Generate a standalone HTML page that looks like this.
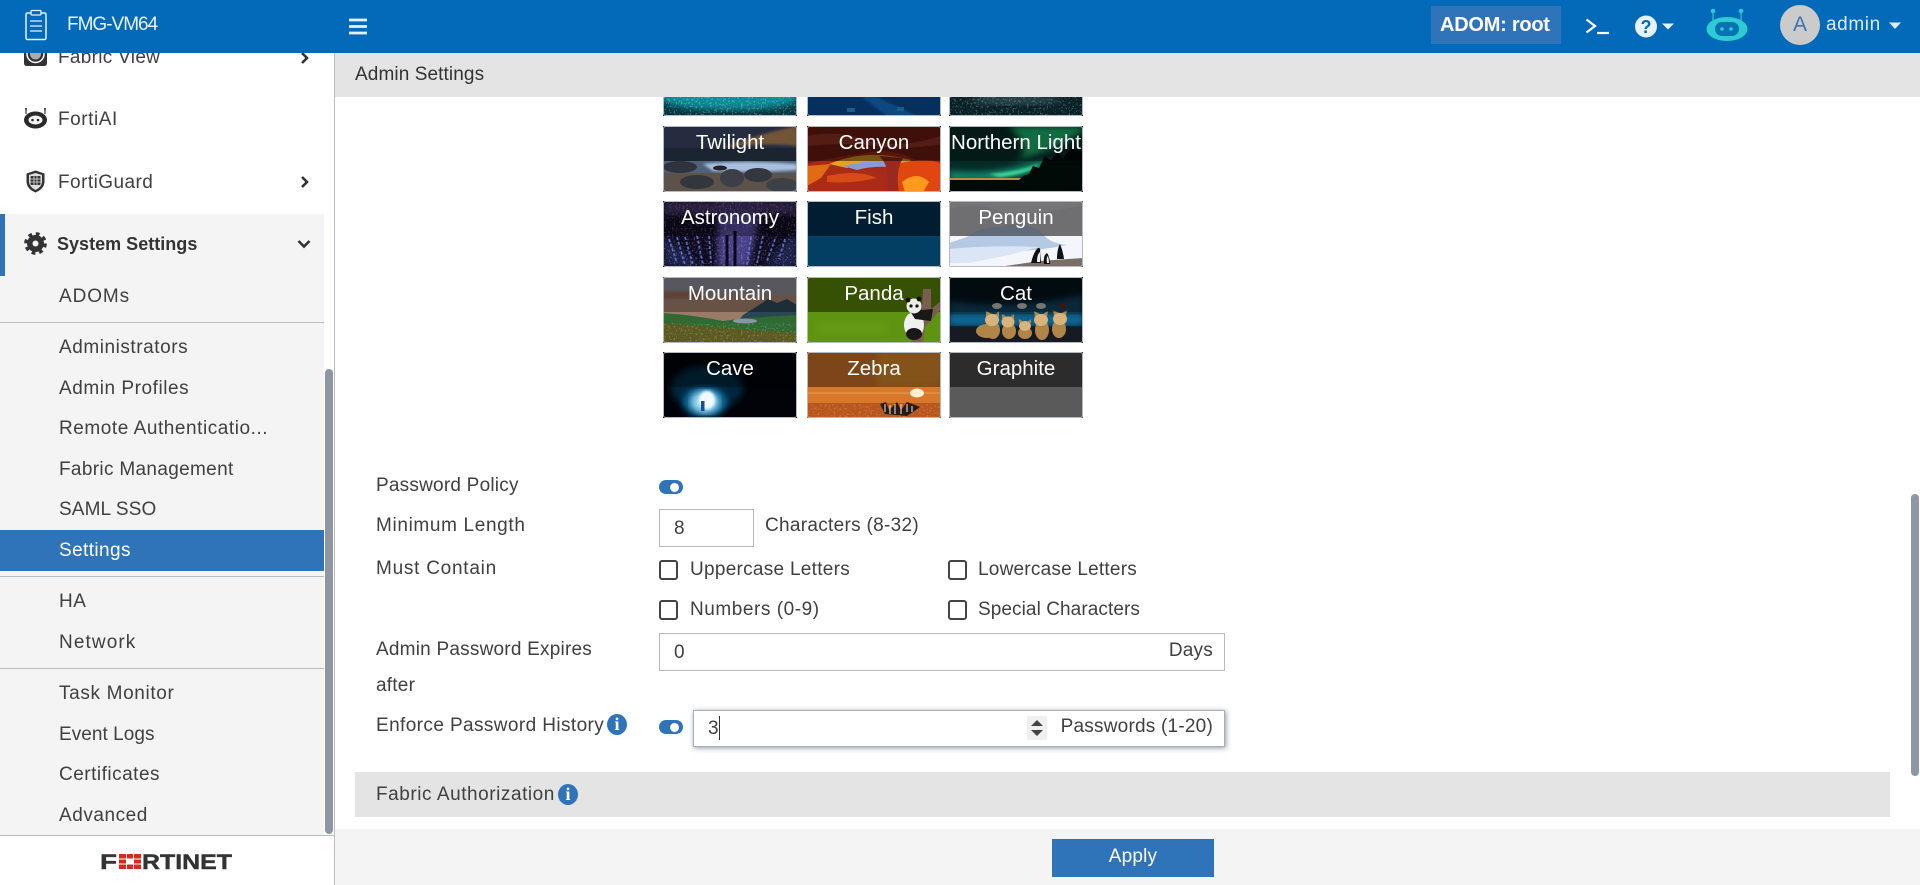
<!DOCTYPE html>
<html lang="en">
<head>
<meta charset="utf-8">
<title>FMG-VM64 Admin Settings</title>
<style>
html,body{margin:0;padding:0;width:1920px;height:885px;overflow:hidden;background:#fff}
body{position:relative;font-family:"Liberation Sans",Arial,sans-serif;font-size:19px;color:#404040}
.a{position:absolute}
.t{position:absolute;white-space:nowrap;line-height:24px;height:24px;margin-top:1px}
.s{letter-spacing:.55px;color:#404040;left:59px}
.f{letter-spacing:.22px;color:#404040}
.box{position:absolute;box-sizing:border-box;background:#fff;border:1px solid #b5bac2}
.cb{position:absolute;box-sizing:border-box;width:19px;height:20px;border:2px solid #444;border-radius:3px;background:#fff}
.tg{position:absolute;width:24px;height:14px;border-radius:7px;background:#2f74b8}
.tg:after{content:"";position:absolute;left:11px;top:2.500px;width:9px;height:9px;border-radius:50%;background:#fff}
.i{position:absolute;width:20px;height:21px;border-radius:50%;background:#2f74b8;color:#fff;font:700 18px/21px "Liberation Serif",serif;text-align:center}
.th{position:absolute;width:134px;height:66px;display:block;overflow:hidden}
.th text{font-family:"Liberation Sans",sans-serif;font-size:20.500px;fill:#fff;text-anchor:middle}
.dv{position:absolute;left:0;width:324px;height:1px;background:#b8bcc6}
</style>
</head>
<body>

<svg width="0" height="0" style="position:absolute">
<defs>
<filter id="n" x="0" y="0" width="100%" height="100%"><feTurbulence type="fractalNoise" baseFrequency=".55" numOctaves="2" seed="4"/><feColorMatrix values="0 0 0 0 1  0 0 0 0 1  0 0 0 0 1  0 0 0 9 -5.2"/></filter>
<filter id="b1"><feGaussianBlur stdDeviation="1.2"/></filter>
<filter id="b3"><feGaussianBlur stdDeviation="3.5"/></filter>
</defs>
</svg>

<!-- thumbnails -->
<!-- partial row -->
<svg class="th" style="left:663px;top:50px" viewBox="0 0 134 66"><rect width="134" height="66" fill="#04363f"/><ellipse cx="67" cy="48" rx="70" ry="12" fill="#0a8a98" filter="url(#b3)"/><rect y="47" width="134" height="19" filter="url(#n)" opacity=".3"/><rect x=".5" y=".5" width="133" height="65" rx="2" fill="none" stroke="#b5bac2"/></svg>
<svg class="th" style="left:807px;top:50px" viewBox="0 0 134 66"><rect width="134" height="66" fill="#05305e"/><path d="M55 47 L80 66 H110 L70 47Z" fill="#0a4a80" filter="url(#b1)"/><rect x="40" y="58" width="8" height="4" fill="#1a5c8c"/><rect x="90" y="57" width="7" height="4" fill="#1a5c8c"/><rect x=".5" y=".5" width="133" height="65" rx="2" fill="none" stroke="#b5bac2"/></svg>
<svg class="th" style="left:949px;top:50px" viewBox="0 0 134 66"><rect width="134" height="66" fill="#082126"/><rect y="47" width="134" height="19" filter="url(#n)" opacity=".25"/><ellipse cx="67" cy="50" rx="45" ry="5" fill="#6a8d96" opacity=".35" filter="url(#b3)"/><rect x=".5" y=".5" width="133" height="65" rx="2" fill="none" stroke="#b5bac2"/></svg>

<!-- Twilight -->
<svg class="th" style="left:663px;top:126px" viewBox="0 0 134 66"><rect width="134" height="66" fill="#5d5249"/><rect width="134" height="25" fill="#3e4868"/><path d="M60 22 Q95 8 134 0 V20 Q100 16 60 22Z" fill="#b88a58" filter="url(#b1)"/><rect y="22" width="134" height="14" fill="#2d3a50"/><path d="M0 35 H134 V47 H0Z" fill="#4f6178"/><path d="M40 38 Q80 34 134 38 V44 Q90 47 50 45Z" fill="#a8c0de" filter="url(#b1)"/><ellipse cx="17" cy="41" rx="17" ry="6" fill="#2f333b"/><ellipse cx="57" cy="42" rx="7" ry="2.500" fill="#22252c"/><ellipse cx="69" cy="52" rx="12" ry="9" fill="#3c3f46"/><ellipse cx="95" cy="49" rx="14" ry="7" fill="#34373e"/><ellipse cx="119" cy="59" rx="16" ry="7" fill="#3c4148"/><ellipse cx="34" cy="56" rx="17" ry="7" fill="#33363d"/><rect width="134" height="35" fill="#000" opacity=".38"/><text x="67" y="23">Twilight</text><rect x=".5" y=".5" width="133" height="65" rx="2" fill="none" stroke="#b5bac2"/></svg>
<!-- Canyon -->
<svg class="th" style="left:807px;top:126px" viewBox="0 0 134 66"><rect width="134" height="66" fill="#a8291a"/><path d="M0 0H134V34H110Q80 20 55 28Q30 30 0 38Z" fill="#7a1f14"/><path d="M0 10 Q30 4 60 14 T134 10 V18 Q100 24 70 20 T0 20Z" fill="#a0392a"/><path d="M22 38 Q60 22 104 34 L100 40 Q70 30 40 42Z" fill="#e8a020"/><path d="M36 40 Q65 32 98 37 L96 43 Q70 38 50 44Z" fill="#8c9ad8"/><path d="M0 46 Q25 36 45 45 Q70 41 78 52 L76 66 H0Z" fill="#a82c16"/><path d="M20 50 Q50 43 70 52 Q45 58 20 56Z" fill="#d84a18"/><path d="M0 40 L24 38 L14 52 L0 60Z" fill="#e26a12"/><path d="M90 38 Q120 30 134 38 V66 H88 Q80 50 90 38Z" fill="#e0460f"/><path d="M95 56 Q110 44 122 56 L116 66 H98Z" fill="#ff9a20"/><path d="M72 30 Q84 40 80 66 H92 Q88 45 96 32Z" fill="#9a2a1f"/><rect width="134" height="35" fill="#000" opacity=".48"/><text x="67" y="23">Canyon</text><rect x=".5" y=".5" width="133" height="65" rx="2" fill="none" stroke="#b5bac2"/></svg>
<!-- Northern Light -->
<svg class="th" style="left:949px;top:126px" viewBox="0 0 134 66"><rect width="134" height="66" fill="#052a26"/><path d="M60 0 Q90 30 60 35 Q95 30 134 5 V0Z" fill="#1fb06a" filter="url(#b3)"/><path d="M0 45 Q40 50 80 38 Q100 32 110 34 Q90 48 50 54 H0Z" fill="#189070" filter="url(#b3)"/><path d="M40 48 Q70 46 90 38 Q80 48 50 51Z" fill="#3fd89a" filter="url(#b1)"/><rect y="52" width="76" height="2" fill="#c08a40"/><rect y="54" width="134" height="12" fill="#020806"/><path d="M64 60 L74 50 L80 48 L84 40 L90 42 L96 30 L102 34 L108 26 L114 32 L122 22 L134 26 V66 H64Z" fill="#020a08"/><rect width="134" height="35" fill="#000" opacity=".38"/><text x="67" y="23">Northern Light</text><rect x=".5" y=".5" width="133" height="65" rx="2" fill="none" stroke="#b5bac2"/></svg>

<!-- Astronomy -->
<svg class="th" style="left:663px;top:201px" viewBox="0 0 134 66"><rect width="134" height="66" fill="#0e0a20"/><path d="M55 0 H100 L85 66 H55Z" fill="#4a3f8a" filter="url(#b3)"/><path d="M0 0 H134 V14 H0Z" fill="#3a2a5a" filter="url(#b3)"/><path d="M0 34 L40 66 H0Z M134 30 L100 66 H134Z" fill="#1a2048" filter="url(#b3)"/><rect width="134" height="66" filter="url(#n)" opacity=".22"/><path d="M6 38 L14 62 M14 36 L22 64 M22 36 L30 64 M34 35 L40 64 M46 35 L48 62 M88 36 L84 64 M100 35 L94 62 M112 38 L104 60 M122 38 L116 58" stroke="#6a78e0" stroke-width="1.800" stroke-dasharray="3 2" opacity=".85"/><path d="M64 34V66 M72 30V66" stroke="#0a0814" stroke-width="3"/><rect width="134" height="35" fill="#000" opacity=".3"/><text x="67" y="23">Astronomy</text><rect x=".5" y=".5" width="133" height="65" rx="2" fill="none" stroke="#b5bac2"/></svg>
<!-- Fish -->
<svg class="th" style="left:807px;top:201px" viewBox="0 0 134 66"><rect width="134" height="66" fill="#023f62"/><rect width="134" height="35" fill="#001d31"/><text x="67" y="23">Fish</text><rect x=".5" y=".5" width="133" height="65" rx="2" fill="none" stroke="#b5bac2"/></svg>
<!-- Penguin -->
<svg class="th" style="left:949px;top:201px" viewBox="0 0 134 66"><rect width="134" height="66" fill="#f4f6fb"/><rect width="134" height="35" fill="#d2d2d6"/><path d="M0 8 Q30 0 50 10 Q70 18 134 4 V0 H0Z" fill="#dedee0"/><path d="M0 42 L18 36 Q30 26 50 26 Q75 20 92 30 Q98 42 118 44 Q90 50 60 50 L0 58Z" fill="#b5c8e4"/><path d="M0 48 Q40 44 90 46 L60 54 L20 62 H0Z" fill="#dae6f5"/><path d="M50 66 L90 60 L134 57 V66Z" fill="#7a6e68"/><path d="M82 62 Q85 50 89 47 Q92 47 91 50 L92 62Z M95 63 Q94 54 98 52 Q101 56 101 63Z M108 58 Q108 48 111 43 Q114 50 115 58Z" fill="#111"/><path d="M88 61 Q88 53 91 51 L91 61Z M98 62 Q97 56 99 55 Q100 58 100 62Z" fill="#eee"/><rect width="134" height="35" fill="#000" opacity=".47"/><text x="67" y="23">Penguin</text><rect x=".5" y=".5" width="133" height="65" rx="2" fill="none" stroke="#b5bac2"/></svg>

<!-- Mountain -->
<svg class="th" style="left:663px;top:277px" viewBox="0 0 134 66"><rect width="134" height="66" fill="#9a7a68"/><rect width="134" height="18" fill="#80808a"/><rect x="0" y="14" width="40" height="8" fill="#8c6254" filter="url(#b1)"/><path d="M80 38 L96 28 L105 22 L114 26 L124 22 L134 28 V46 H74Z" fill="#2a4654"/><path d="M0 36 Q30 38 60 44 Q90 40 134 38 V66 H0Z" fill="#2f6a32"/><path d="M0 46 Q50 50 134 56 V66 H0Z" fill="#5a5a20"/><rect y="46" width="134" height="20" filter="url(#n)" fill="#e0a040" opacity=".2"/><ellipse cx="82" cy="44" rx="12" ry="2.500" fill="#8a95a8"/><rect width="134" height="35" fill="#000" opacity=".32"/><text x="67" y="23">Mountain</text><rect x=".5" y=".5" width="133" height="65" rx="2" fill="none" stroke="#b5bac2"/></svg>
<!-- Panda -->
<svg class="th" style="left:807px;top:277px" viewBox="0 0 134 66"><rect width="134" height="66" fill="#5e9410"/><rect x="10" y="44" width="70" height="14" fill="#649a14" filter="url(#b3)"/><rect width="134" height="35" fill="#5e8a08"/><rect width="134" height="35" fill="#000" opacity=".42"/><path d="M104 66 L110 50 L115 30 L116 12 H124 L124 32 L134 24 V32 L118 50 L116 66Z" fill="#7a5f50"/><ellipse cx="107" cy="48" rx="10" ry="13" fill="#f0f0ee"/><ellipse cx="107" cy="57" rx="8" ry="6" fill="#181818"/><path d="M103 34 L126 32 L124 44 L108 42Z" fill="#181818"/><circle cx="107" cy="29" r="7.500" fill="#ecece8"/><circle cx="101" cy="23" r="2.400" fill="#111"/><circle cx="112" cy="22" r="2.400" fill="#111"/><circle cx="104" cy="29" r="1.600" fill="#111"/><circle cx="110" cy="29" r="1.600" fill="#111"/><text x="67" y="23">Panda</text><rect x=".5" y=".5" width="133" height="65" rx="2" fill="none" stroke="#b5bac2"/></svg>
<!-- Cat -->
<svg class="th" style="left:949px;top:277px" viewBox="0 0 134 66"><rect width="134" height="66" fill="#041018"/><path d="M0 24 Q60 34 134 18 V50 H0Z" fill="#0d3a52" filter="url(#b3)"/><rect y="38" width="134" height="10" fill="#0a6a9a" filter="url(#b3)"/><rect y="50" width="134" height="16" fill="#171a22"/><ellipse cx="48" cy="29" rx="5" ry="3" fill="#a8a8a2"/><ellipse cx="73" cy="29" rx="5" ry="3" fill="#a8a8a2"/><ellipse cx="92" cy="29" rx="5" ry="3" fill="#a8a8a2"/><circle cx="114" cy="29" r="3" fill="#6a1818"/><g fill="#b08648"><ellipse cx="38" cy="54" rx="11" ry="7"/><ellipse cx="44" cy="53" rx="7" ry="9"/><ellipse cx="60" cy="54" rx="7" ry="8"/><ellipse cx="76" cy="56" rx="7" ry="6"/><ellipse cx="93" cy="53" rx="7" ry="10"/><ellipse cx="110" cy="52" rx="7" ry="9"/><path d="M37 40 L37 34 L43 37 L47 37 L50 34 L50 40Z M53 42 L53 37 L58 40 L61 40 L65 37 L65 42Z M70 46 L70 42 L75 45 L78 45 L82 42 L82 46Z M86 40 L85 34 L91 37 L94 37 L99 34 L98 40Z M105 39 L104 33 L110 36 L113 36 L118 33 L117 39Z"/></g><g fill="#d8b47c"><ellipse cx="43" cy="43" rx="7" ry="6"/><ellipse cx="59" cy="45" rx="6.500" ry="5.500"/><ellipse cx="76" cy="49" rx="6" ry="5"/><ellipse cx="92" cy="43" rx="7" ry="6"/><ellipse cx="111" cy="42" rx="7" ry="6"/></g><rect width="134" height="35" fill="#000" opacity=".3"/><text x="67" y="23">Cat</text><rect x=".5" y=".5" width="133" height="65" rx="2" fill="none" stroke="#b5bac2"/></svg>

<!-- Cave -->
<svg class="th" style="left:663px;top:352px" viewBox="0 0 134 66"><rect width="134" height="66" fill="#010308"/><ellipse cx="44" cy="36" rx="36" ry="22" fill="#04283e" filter="url(#b3)"/><ellipse cx="42" cy="50" rx="22" ry="15" fill="#0a6a9c" filter="url(#b3)"/><ellipse cx="42" cy="50" rx="14" ry="11" fill="#a0dcf4" filter="url(#b3)"/><ellipse cx="44" cy="48" rx="8" ry="9" fill="#f2fafd" filter="url(#b1)"/><rect x="38" y="49" width="3.500" height="10" fill="#1a4a9a"/><rect width="134" height="35" fill="#000" opacity=".3"/><text x="67" y="23">Cave</text><rect x=".5" y=".5" width="133" height="65" rx="2" fill="none" stroke="#b5bac2"/></svg>
<!-- Zebra -->
<svg class="th" style="left:807px;top:352px" viewBox="0 0 134 66"><rect width="134" height="66" fill="#d8741f"/><rect width="134" height="35" fill="#7c4618"/><rect x="70" y="0" width="64" height="35" fill="#8a5c1e" filter="url(#b3)" opacity=".6"/><rect y="35" width="134" height="16" fill="#d9782a"/><rect y="40" width="134" height="2" fill="#e8a050" opacity=".5"/><ellipse cx="110" cy="41" rx="7" ry="4.500" fill="#fff2d0"/><rect y="51" width="134" height="15" fill="#b8561c"/><rect y="52" width="134" height="14" filter="url(#n)" opacity=".18"/><path d="M73 52 L79 50 L82 58 L90 50 L94 58 L100 50 L108 53 L113 55 L106 60 L100 64 L78 62Z" fill="#2a1a14"/><path d="M78 52V60 M83 53V62 M88 52V62 M94 52V62 M100 52V60 M105 54V60" stroke="#eee" stroke-width="1"/><text x="67" y="23">Zebra</text><rect x=".5" y=".5" width="133" height="65" rx="2" fill="none" stroke="#b5bac2"/></svg>
<!-- Graphite -->
<svg class="th" style="left:949px;top:352px" viewBox="0 0 134 66"><rect width="134" height="66" fill="#5a5a5a"/><rect width="134" height="35" fill="#2c2c2c"/><text x="67" y="23">Graphite</text><rect x=".5" y=".5" width="133" height="65" rx="2" fill="none" stroke="#b5bac2"/></svg>

<!-- form -->
<div class="t f" style="left:376px;top:473px">Password Policy</div>
<div class="tg" style="left:659px;top:480px"></div>

<div class="t f" style="left:376px;top:513px;letter-spacing:.65px">Minimum Length</div>
<div class="box" style="left:659px;top:509px;width:95px;height:38px"></div>
<div class="t f" style="left:674px;top:516px">8</div>
<div class="t f" style="left:765px;top:513px;letter-spacing:.3px">Characters (8-32)</div>

<div class="t f" style="left:376px;top:556px;letter-spacing:.75px">Must Contain</div>
<div class="cb" style="left:659px;top:560px"></div>
<div class="t f" style="left:690px;top:557px;letter-spacing:.28px">Uppercase Letters</div>
<div class="cb" style="left:948px;top:560px"></div>
<div class="t f" style="left:978px;top:557px">Lowercase Letters</div>
<div class="cb" style="left:659px;top:600px"></div>
<div class="t f" style="left:690px;top:597px;letter-spacing:.55px">Numbers (0-9)</div>
<div class="cb" style="left:948px;top:600px"></div>
<div class="t f" style="left:978px;top:597px;letter-spacing:.08px">Special Characters</div>

<div class="t f" style="left:376px;top:637px">Admin Password Expires</div>
<div class="t f" style="left:376px;top:673px">after</div>
<div class="box" style="left:659px;top:633px;width:566px;height:38px"></div>
<div class="t f" style="left:674px;top:640px">0</div>
<div class="t f" style="right:707px;top:638px">Days</div>

<div class="t f" style="left:376px;top:713px;letter-spacing:.4px">Enforce Password History</div>
<div class="i" style="left:607px;top:714px">i</div>
<div class="tg" style="left:659px;top:720px"></div>
<div class="box" style="left:693px;top:710px;width:532px;height:37px;box-shadow:1px 1px 5px rgba(60,70,90,.55);border-color:#aab0b8"></div>
<div class="t f" style="left:708px;top:716px">3</div>
<div class="a" style="left:719px;top:716px;width:1px;height:24px;background:#333"></div>
<div class="a" style="left:1027px;top:716px;width:20px;height:24px;background:#f0f0f0"></div>
<svg class="a" style="left:1030px;top:719px" width="14" height="18" viewBox="0 0 14 18"><path d="M7 1 L13 7 H1Z M1 11 H13 L7 17Z" fill="#444"/></svg>
<div class="t f" style="right:707px;top:714px">Passwords (1-20)</div>

<div class="a" style="left:355px;top:772px;width:1535px;height:45px;background:#e4e4e4"></div>
<div class="t f" style="left:376px;top:782px;letter-spacing:.55px">Fabric Authorization</div>
<div class="i" style="left:558px;top:784px">i</div>

<!-- main scrollbar -->
<div class="a" style="left:1911px;top:494px;width:8px;height:282px;border-radius:4px;background:#8f97a5"></div>

<!-- bottom bar -->
<div class="a" style="left:335px;top:829px;width:1585px;height:56px;background:#f4f4f4"></div>
<div class="a" style="left:1052px;top:839px;width:162px;height:38px;background:#2f74b8;color:#fff;text-align:center;line-height:36px;letter-spacing:.2px">Apply</div>

<!-- admin settings bar -->
<div class="a" style="left:335px;top:53px;width:1585px;height:44px;background:#e4e4e4"></div>
<div class="t" style="left:355px;top:62px;color:#333;letter-spacing:.1px">Admin Settings</div>

<!-- sidebar -->
<div class="a" style="left:0;top:0;width:334px;height:885px;background:#fff;border-right:1px solid #b8bcc6"></div>
<div class="a" style="left:0;top:214px;width:324px;height:621px;background:#f4f4f4"></div>
<div class="a" style="left:0;top:214px;width:5px;height:62px;background:#2f74b8"></div>
<div class="a" style="left:0;top:530px;width:324px;height:41px;background:#2f74b8"></div>
<div class="dv" style="top:322px"></div>
<div class="dv" style="top:576px"></div>
<div class="dv" style="top:668px"></div>
<div class="a" style="left:0;top:835px;width:334px;height:1px;background:#b8bcc6"></div>
<div class="a" style="left:325px;top:369px;width:8px;height:465px;border-radius:4px;background:#8f95a3"></div>

<!-- sidebar top icons -->
<svg class="a" style="left:24px;top:53px" width="23" height="14" viewBox="0 0 23 14"><path d="M0 0H23V10Q23 13 20 13H3Q0 13 0 10Z" fill="#333"/><circle cx="11.500" cy="1" r="8.500" fill="none" stroke="#fff" stroke-width="1.500"/><circle cx="11.500" cy="1" r="5.500" fill="#aaa"/></svg>
<div class="t s" style="left:58px;top:45px;color:#404040;letter-spacing:.3px">Fabric View</div>
<svg class="a" style="left:300px;top:52px" width="10" height="12" viewBox="0 0 10 12"><path d="M2 1 L7 6 L2 11" fill="none" stroke="#333" stroke-width="2.600"/></svg>

<svg class="a" style="left:24px;top:108px" width="23" height="21" viewBox="0 0 23 21"><path d="M2 0V6 M21 0V6" stroke="#333" stroke-width="1.200"/><circle cx="2" cy="1" r="1" fill="#333"/><circle cx="21" cy="1" r="1" fill="#333"/><ellipse cx="11.500" cy="12" rx="11.500" ry="8.500" fill="#2a2a2a"/><ellipse cx="11.500" cy="12" rx="7" ry="4.500" fill="#f4f4f4"/><circle cx="8.500" cy="12" r="1.300" fill="#2a2a2a"/><circle cx="14" cy="12" r="1.300" fill="#2a2a2a"/></svg>
<div class="t s" style="left:58px;top:107px">FortiAI</div>

<svg class="a" style="left:26px;top:170px" width="19" height="23" viewBox="0 0 19 23"><path d="M9.500 .5 L18.500 3.500 V12 Q18 19 9.500 22.500 Q1 19 .5 12 V3.500Z" fill="#333"/><path d="M9.500 3 L16 5 V12 Q15.500 17 9.500 20 Q3.500 17 3 12 V5Z" fill="#ddd"/><rect x="4.500" y="6" width="10" height="9" rx="1" fill="#333"/><path d="M4.500 9H14.500 M4.500 12H14.500 M8 6V15 M11 6V15" stroke="#ddd" stroke-width=".8"/></svg>
<div class="t s" style="left:58px;top:170px;letter-spacing:.45px">FortiGuard</div>
<svg class="a" style="left:300px;top:176px" width="10" height="12" viewBox="0 0 10 12"><path d="M2 1 L7 6 L2 11" fill="none" stroke="#333" stroke-width="2.600"/></svg>

<svg class="a" style="left:24px;top:232px" width="23" height="23" viewBox="0 0 23 23"><circle cx="11.500" cy="11.500" r="9.700" fill="none" stroke="#333" stroke-width="3.300" stroke-dasharray="3.800 3.820"/><circle cx="11.500" cy="11.500" r="8.500" fill="#333"/><circle cx="11.500" cy="11.500" r="3" fill="#f4f4f4"/></svg>
<div class="t" style="left:57px;top:231px;font-weight:700;color:#333;font-size:18px;letter-spacing:.02px">System Settings</div>
<svg class="a" style="left:297px;top:239px" width="14" height="10" viewBox="0 0 14 10"><path d="M1.500 2 L7 7.500 L12.500 2" fill="none" stroke="#333" stroke-width="2.600"/></svg>

<div class="t s" style="top:284px;letter-spacing:.9px">ADOMs</div>
<div class="t s" style="top:335px">Administrators</div>
<div class="t s" style="top:376px">Admin Profiles</div>
<div class="t s" style="top:416px">Remote Authenticatio...</div>
<div class="t s" style="top:457px;letter-spacing:.33px">Fabric Management</div>
<div class="t s" style="top:497px;letter-spacing:.12px">SAML SSO</div>
<div class="t s" style="top:538px;color:#fff;letter-spacing:.4px">Settings</div>
<div class="t s" style="top:589px">HA</div>
<div class="t s" style="top:630px;letter-spacing:1.1px">Network</div>
<div class="t s" style="top:681px;letter-spacing:.65px">Task Monitor</div>
<div class="t s" style="top:722px;letter-spacing:.05px">Event Logs</div>
<div class="t s" style="top:762px;letter-spacing:.5px">Certificates</div>
<div class="t s" style="top:803px">Advanced</div>

<!-- fortinet logo -->
<svg class="a" style="left:100px;top:852px" width="134" height="19" viewBox="0 0 134 19">
<text x="0" y="17" font-family="Liberation Sans,sans-serif" font-weight="700" font-size="21" fill="#333" stroke="#333" stroke-width=".4" textLength="17" lengthAdjust="spacingAndGlyphs">F</text>
<g fill="#da291c"><rect x="19" y="2" width="7" height="4.500"/><rect x="27" y="2" width="6" height="4.500"/><rect x="34" y="2" width="7" height="4.500"/><rect x="19" y="7.500" width="7" height="4"/><rect x="34" y="7.500" width="7" height="4"/><rect x="19" y="12.500" width="7" height="4.500"/><rect x="27" y="12.500" width="6" height="4.500"/><rect x="34" y="12.500" width="7" height="4.500"/></g>
<text x="42" y="17" font-family="Liberation Sans,sans-serif" font-weight="700" font-size="21" fill="#333" stroke="#333" stroke-width=".4" textLength="90" lengthAdjust="spacingAndGlyphs">RTINET</text>
</svg>

<!-- header -->
<div class="a" style="left:0;top:0;width:1920px;height:53px;background:#0369b9"></div>
<svg class="a" style="left:24px;top:9px" width="24" height="32" viewBox="0 0 24 32"><rect x="2" y="4" width="20" height="26.500" rx="1.500" fill="none" stroke="#e6f3ff" stroke-width="1.500"/><rect x="7" y="1.500" width="10" height="4.500" rx="1" fill="#0369b9" stroke="#e6f3ff" stroke-width="1.300"/><path d="M6 12H18 M6 17H18 M6 22H18" stroke="#e6f3ff" stroke-width="1.300"/></svg>
<div class="t" style="left:67px;top:12px;color:#e9f4ff;letter-spacing:-1px">FMG-VM64</div>
<svg class="a" style="left:349px;top:18px" width="18" height="17" viewBox="0 0 18 17"><path d="M0 2H18 M0 8.500H18 M0 15H18" stroke="#e6f3ff" stroke-width="2.700"/></svg>

<div class="a" style="left:1431px;top:6px;width:130px;height:38px;background:#2f74b8"></div>
<div class="t" style="left:1440px;top:11px;color:#fff;font-weight:700;font-size:20px;letter-spacing:-.25px;margin-top:2px">ADOM: root</div>
<svg class="a" style="left:1585px;top:18px" width="24" height="17" viewBox="0 0 24 17"><path d="M1.500 1.500 L10 8 L1.500 14.500" fill="none" stroke="#fff" stroke-width="2.200"/><path d="M12 15H24" stroke="#fff" stroke-width="2.200"/></svg>
<svg class="a" style="left:1635px;top:15px" width="40" height="23" viewBox="0 0 40 23"><circle cx="11" cy="11.500" r="11" fill="#e6f2fd"/><text x="11" y="18" text-anchor="middle" font-family="Liberation Sans,sans-serif" font-weight="700" font-size="18" fill="#0369b9">?</text><path d="M27 8.500H39 L33 14.500Z" fill="#e6f2fd"/></svg>
<svg class="a" style="left:1705px;top:7px" width="44" height="36" viewBox="0 0 44 36"><path d="M8 5V14 M36 5V14" stroke="#2cc8d2" stroke-width="1.200"/><circle cx="8" cy="4" r="2.300" fill="#2cc8d2"/><circle cx="36" cy="4" r="2.300" fill="#2cc8d2"/><ellipse cx="22" cy="22" rx="20.500" ry="12" fill="#2ccdd2"/><rect x="10" y="15" width="24" height="14" rx="7" fill="#0a71b4"/><circle cx="17" cy="22" r="1.800" fill="#2ccdd2"/><circle cx="26" cy="22" r="1.800" fill="#2ccdd2"/></svg>
<div class="a" style="left:1780px;top:5px;width:40px;height:40px;border-radius:50%;background:#cbcbcb;color:#3f72b5;text-align:center;line-height:40px;font-size:21px">A</div>
<div class="t" style="left:1826px;top:12px;color:#dcecfb;letter-spacing:.6px">admin</div>
<svg class="a" style="left:1888px;top:22px" width="14" height="8" viewBox="0 0 14 8"><path d="M1 .5H13 L7 7Z" fill="#dcecfb"/></svg>

</body>
</html>
